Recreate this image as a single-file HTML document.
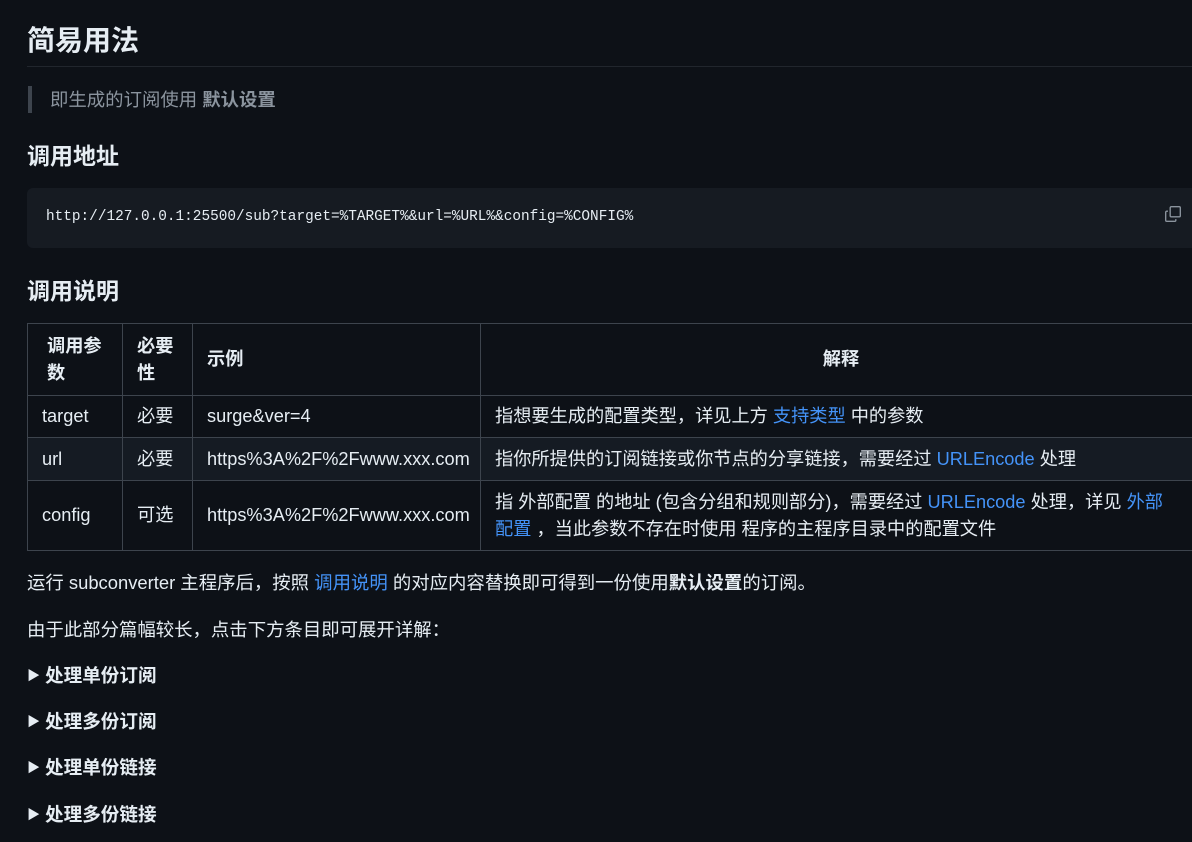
<!DOCTYPE html>
<html><head><meta charset="utf-8"><style>
body{margin:0;background:#0d1117;color:#e6edf3;font-family:"Liberation Sans","Noto Sans CJK SC",sans-serif;width:1192px;height:842px;overflow:hidden;position:relative}
.a{position:absolute;white-space:nowrap}
h2{position:absolute;left:27px;top:22px;margin:0;font-size:28px;font-weight:bold;line-height:38px}
.hr{position:absolute;left:27px;right:0;top:66px;height:1px;background:#21262d}
.bq{position:absolute;left:28px;top:86px;width:4px;height:27px;background:#3d444d}
.bqt{left:50px;top:87px;font-size:18.4px;color:#8b949e;line-height:26px}
h3{position:absolute;left:27px;margin:0;font-size:23px;font-weight:bold;line-height:30px}
.code{position:absolute;left:27px;right:0;top:188px;height:60px;background:#161b22;border-radius:6px 0 0 6px}
.code span{position:absolute;left:19px;top:21px;font-family:"Liberation Mono",monospace;font-size:14.4px;color:#e6edf3}
table{position:absolute;left:27px;top:323px;border-collapse:collapse;font-size:18.2px;width:1175px;table-layout:fixed}
td,th{border:1px solid #3d444d;padding:0 14px;line-height:27px;text-align:left;white-space:nowrap}
th{font-weight:bold}
a{color:#4493f8;text-decoration:none}
.p{left:27px;font-size:18.4px;line-height:26px}
.d{left:27px;font-size:18.6px;font-weight:bold;line-height:26px}
.d i{font-style:normal;font-size:13px;display:inline-block;width:18px;vertical-align:2px}
</style></head><body>
<h2>简易用法</h2><div class="hr"></div>
<div class="bq"></div><div class="a bqt">即生成的订阅使用 <b>默认设置</b></div>
<h3 style="top:141px">调用地址</h3>
<div class="code"><span>http://127.0.0.1:25500/sub?target=%TARGET%&amp;url=%URL%&amp;config=%CONFIG%</span>
<svg style="position:absolute;right:10px;top:17px" width="18" height="18" viewBox="0 0 16 16" fill="none" stroke="#8b949e" stroke-width="1.2"><rect x="5.5" y="1.5" width="9" height="9" rx="1"/><path d="M3.5 5.5h-1a1 1 0 0 0-1 1v7a1 1 0 0 0 1 1h7a1 1 0 0 0 1-1v-1"/></svg></div>
<h3 style="top:276px">调用说明</h3>
<table>
<colgroup><col style="width:95px"><col style="width:70px"><col style="width:288px"><col></colgroup>
<tr style="height:72px"><th style="padding:0 10px 0 19px;white-space:normal">调用参数</th><th style="padding:0 14px;white-space:normal">必要性</th><th>示例</th><th style="text-align:center">解释</th></tr>
<tr style="height:42px"><td>target</td><td>必要</td><td>surge&amp;ver=4</td><td>指想要生成的配置类型，详见上方 <a>支持类型</a> 中的参数</td></tr>
<tr style="height:43px;background:#151b23"><td>url</td><td>必要</td><td>https%3A%2F%2Fwww.xxx.com</td><td>指你所提供的订阅链接或你节点的分享链接，需要经过 <a>URLEncode</a> 处理</td></tr>
<tr style="height:70px"><td>config</td><td>可选</td><td>https%3A%2F%2Fwww.xxx.com</td><td>指 外部配置 的地址 (包含分组和规则部分)，需要经过 <a>URLEncode</a> 处理，详见 <a>外部</a><br><a>配置</a> ，当此参数不存在时使用 程序的主程序目录中的配置文件</td></tr>
</table>
<div class="a p" style="top:570px">运行 subconverter 主程序后，按照 <a>调用说明</a> 的对应内容替换即可得到一份使用<b>默认设置</b>的订阅。</div>
<div class="a p" style="top:617px">由于此部分篇幅较长，点击下方条目即可展开详解：</div>
<div class="a d" style="top:663px"><i>▶</i>处理单份订阅</div>
<div class="a d" style="top:709px"><i>▶</i>处理多份订阅</div>
<div class="a d" style="top:755px"><i>▶</i>处理单份链接</div>
<div class="a d" style="top:802px"><i>▶</i>处理多份链接</div>
</body></html>
